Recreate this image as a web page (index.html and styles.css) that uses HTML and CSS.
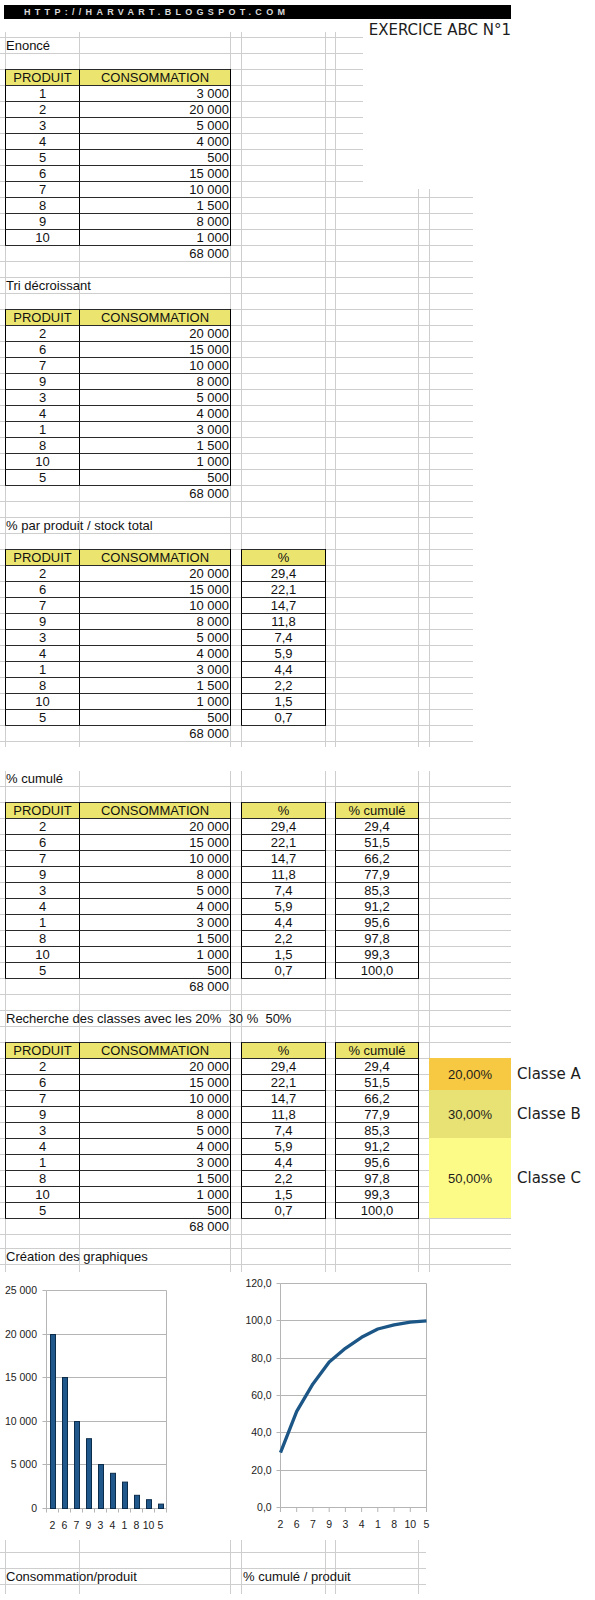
FILE: index.html
```html
<!DOCTYPE html>
<html lang="fr">
<head>
<meta charset="utf-8">
<title>Exercice ABC N°1</title>
<link rel="stylesheet" href="styles.css">
</head>
<body>
<header class="top">
  <div class="banner">HTTP://HARVART.BLOGSPOT.COM</div>
  <h1 class="title">EXERCICE ABC N°1</h1>
</header>

<section class="sheet sheet-1">
  <p class="lbl">Enoncé</p>
  <div class="tables">
    <div class="tbl tbl-ab">
      <div class="c hd">PRODUIT</div><div class="c hd">CONSOMMATION</div>
      <div class="c">1</div><div class="c num">3 000</div>
      <div class="c">2</div><div class="c num">20 000</div>
      <div class="c">3</div><div class="c num">5 000</div>
      <div class="c">4</div><div class="c num">4 000</div>
      <div class="c">5</div><div class="c num">500</div>
      <div class="c">6</div><div class="c num">15 000</div>
      <div class="c">7</div><div class="c num">10 000</div>
      <div class="c">8</div><div class="c num">1 500</div>
      <div class="c">9</div><div class="c num">8 000</div>
      <div class="c">10</div><div class="c num">1 000</div>
    </div>
  </div>
  <p class="tot">68 000</p>

  <p class="lbl">Tri décroissant</p>
  <div class="tables">
    <div class="tbl tbl-ab">
      <div class="c hd">PRODUIT</div><div class="c hd">CONSOMMATION</div>
      <div class="c">2</div><div class="c num">20 000</div>
      <div class="c">6</div><div class="c num">15 000</div>
      <div class="c">7</div><div class="c num">10 000</div>
      <div class="c">9</div><div class="c num">8 000</div>
      <div class="c">3</div><div class="c num">5 000</div>
      <div class="c">4</div><div class="c num">4 000</div>
      <div class="c">1</div><div class="c num">3 000</div>
      <div class="c">8</div><div class="c num">1 500</div>
      <div class="c">10</div><div class="c num">1 000</div>
      <div class="c">5</div><div class="c num">500</div>
    </div>
  </div>
  <p class="tot">68 000</p>

  <p class="lbl">% par produit / stock total</p>
  <div class="tables">
    <div class="tbl tbl-ab">
      <div class="c hd">PRODUIT</div><div class="c hd">CONSOMMATION</div>
      <div class="c">2</div><div class="c num">20 000</div>
      <div class="c">6</div><div class="c num">15 000</div>
      <div class="c">7</div><div class="c num">10 000</div>
      <div class="c">9</div><div class="c num">8 000</div>
      <div class="c">3</div><div class="c num">5 000</div>
      <div class="c">4</div><div class="c num">4 000</div>
      <div class="c">1</div><div class="c num">3 000</div>
      <div class="c">8</div><div class="c num">1 500</div>
      <div class="c">10</div><div class="c num">1 000</div>
      <div class="c">5</div><div class="c num">500</div>
    </div>
    <div class="tbl tbl-d">
      <div class="c hd">%</div>
      <div class="c">29,4</div><div class="c">22,1</div><div class="c">14,7</div><div class="c">11,8</div><div class="c">7,4</div>
      <div class="c">5,9</div><div class="c">4,4</div><div class="c">2,2</div><div class="c">1,5</div><div class="c">0,7</div>
    </div>
  </div>
  <p class="tot">68 000</p>
</section>

<section class="sheet sheet-2">
  <p class="lbl lbl-first">% cumulé</p>
  <div class="tables">
    <div class="tbl tbl-ab">
      <div class="c hd">PRODUIT</div><div class="c hd">CONSOMMATION</div>
      <div class="c">2</div><div class="c num">20 000</div>
      <div class="c">6</div><div class="c num">15 000</div>
      <div class="c">7</div><div class="c num">10 000</div>
      <div class="c">9</div><div class="c num">8 000</div>
      <div class="c">3</div><div class="c num">5 000</div>
      <div class="c">4</div><div class="c num">4 000</div>
      <div class="c">1</div><div class="c num">3 000</div>
      <div class="c">8</div><div class="c num">1 500</div>
      <div class="c">10</div><div class="c num">1 000</div>
      <div class="c">5</div><div class="c num">500</div>
    </div>
    <div class="tbl tbl-d">
      <div class="c hd">%</div>
      <div class="c">29,4</div><div class="c">22,1</div><div class="c">14,7</div><div class="c">11,8</div><div class="c">7,4</div>
      <div class="c">5,9</div><div class="c">4,4</div><div class="c">2,2</div><div class="c">1,5</div><div class="c">0,7</div>
    </div>
    <div class="tbl tbl-f">
      <div class="c hd">% cumulé</div>
      <div class="c">29,4</div><div class="c">51,5</div><div class="c">66,2</div><div class="c">77,9</div><div class="c">85,3</div>
      <div class="c">91,2</div><div class="c">95,6</div><div class="c">97,8</div><div class="c">99,3</div><div class="c">100,0</div>
    </div>
  </div>
  <p class="tot">68 000</p>

  <p class="lbl">Recherche des classes avec les 20%&nbsp; 30 %&nbsp; 50%</p>
  <div class="tables">
    <div class="tbl tbl-ab">
      <div class="c hd">PRODUIT</div><div class="c hd">CONSOMMATION</div>
      <div class="c">2</div><div class="c num">20 000</div>
      <div class="c">6</div><div class="c num">15 000</div>
      <div class="c">7</div><div class="c num">10 000</div>
      <div class="c">9</div><div class="c num">8 000</div>
      <div class="c">3</div><div class="c num">5 000</div>
      <div class="c">4</div><div class="c num">4 000</div>
      <div class="c">1</div><div class="c num">3 000</div>
      <div class="c">8</div><div class="c num">1 500</div>
      <div class="c">10</div><div class="c num">1 000</div>
      <div class="c">5</div><div class="c num">500</div>
    </div>
    <div class="tbl tbl-d">
      <div class="c hd">%</div>
      <div class="c">29,4</div><div class="c">22,1</div><div class="c">14,7</div><div class="c">11,8</div><div class="c">7,4</div>
      <div class="c">5,9</div><div class="c">4,4</div><div class="c">2,2</div><div class="c">1,5</div><div class="c">0,7</div>
    </div>
    <div class="tbl tbl-f">
      <div class="c hd">% cumulé</div>
      <div class="c">29,4</div><div class="c">51,5</div><div class="c">66,2</div><div class="c">77,9</div><div class="c">85,3</div>
      <div class="c">91,2</div><div class="c">95,6</div><div class="c">97,8</div><div class="c">99,3</div><div class="c">100,0</div>
    </div>
    <div class="classes">
      <div class="cls cls-a">20,00%</div>
      <div class="cls cls-b">30,00%</div>
      <div class="cls cls-c">50,00%</div>
    </div>
    <div class="class-names">
      <div class="cname cls-a-h">Classe A</div>
      <div class="cname cls-b-h">Classe B</div>
      <div class="cname cls-c-h">Classe C</div>
    </div>
  </div>
  <p class="tot">68 000</p>
</section>

<section class="sheet sheet-3">
  <p class="lbl">Création des graphiques</p>
</section>

<section class="charts">
  <svg class="chart chart-bar" width="230" height="268" viewBox="0 0 230 268">
    <g class="gl">
      <line x1="46.5" y1="18.5" x2="166.5" y2="18.5"/>
      <line x1="46.5" y1="62.5" x2="166.5" y2="62.5"/>
      <line x1="46.5" y1="105.5" x2="166.5" y2="105.5"/>
      <line x1="46.5" y1="149.5" x2="166.5" y2="149.5"/>
      <line x1="46.5" y1="192.5" x2="166.5" y2="192.5"/>
      <line x1="42.5" y1="236.5" x2="166.5" y2="236.5"/>
      <line x1="46.5" y1="18.5" x2="46.5" y2="240.5"/>
      <line x1="166.5" y1="18.5" x2="166.5" y2="240.5"/>
      <line x1="42.5" y1="18.5" x2="46.5" y2="18.5"/>
      <line x1="42.5" y1="62.5" x2="46.5" y2="62.5"/>
      <line x1="42.5" y1="105.5" x2="46.5" y2="105.5"/>
      <line x1="42.5" y1="149.5" x2="46.5" y2="149.5"/>
      <line x1="42.5" y1="192.5" x2="46.5" y2="192.5"/>
      <line x1="58.5" y1="236.5" x2="58.5" y2="240.5"/>
      <line x1="70.5" y1="236.5" x2="70.5" y2="240.5"/>
      <line x1="82.5" y1="236.5" x2="82.5" y2="240.5"/>
      <line x1="94.5" y1="236.5" x2="94.5" y2="240.5"/>
      <line x1="106.5" y1="236.5" x2="106.5" y2="240.5"/>
      <line x1="118.5" y1="236.5" x2="118.5" y2="240.5"/>
      <line x1="130.5" y1="236.5" x2="130.5" y2="240.5"/>
      <line x1="142.5" y1="236.5" x2="142.5" y2="240.5"/>
      <line x1="154.5" y1="236.5" x2="154.5" y2="240.5"/>
    </g>
    <g class="bars">
      <rect x="50.5" y="62.5" width="5" height="174"/>
      <rect x="62.5" y="105.5" width="5" height="131"/>
      <rect x="74.5" y="149.5" width="5" height="87"/>
      <rect x="86.5" y="166.7" width="5" height="69.8"/>
      <rect x="98.5" y="192.5" width="5" height="44"/>
      <rect x="110.5" y="201.3" width="5" height="35.2"/>
      <rect x="122.5" y="210.1" width="5" height="26.4"/>
      <rect x="134.5" y="223.3" width="5" height="13.2"/>
      <rect x="146.5" y="227.7" width="5" height="8.8"/>
      <rect x="158.5" y="232.1" width="5" height="4.4"/>
    </g>
    <g class="axt axt-y">
      <text x="37" y="22.3">25 000</text>
      <text x="37" y="66.3">20 000</text>
      <text x="37" y="109.3">15 000</text>
      <text x="37" y="153.3">10 000</text>
      <text x="37" y="196.3">5 000</text>
      <text x="37" y="240.3">0</text>
    </g>
    <g class="axt axt-x">
      <text x="52.5" y="257.3">2</text>
      <text x="64.5" y="257.3">6</text>
      <text x="76.5" y="257.3">7</text>
      <text x="88.5" y="257.3">9</text>
      <text x="100.5" y="257.3">3</text>
      <text x="112.5" y="257.3">4</text>
      <text x="124.5" y="257.3">1</text>
      <text x="136.5" y="257.3">8</text>
      <text x="148.5" y="257.3">10</text>
      <text x="160.5" y="257.3">5</text>
    </g>
  </svg>

  <svg class="chart chart-line" width="210" height="268" viewBox="0 0 210 268">
    <g class="gl">
      <line x1="50.5" y1="11.5" x2="196.5" y2="11.5"/>
      <line x1="50.5" y1="48.5" x2="196.5" y2="48.5"/>
      <line x1="50.5" y1="86.5" x2="196.5" y2="86.5"/>
      <line x1="50.5" y1="123.5" x2="196.5" y2="123.5"/>
      <line x1="50.5" y1="160.5" x2="196.5" y2="160.5"/>
      <line x1="50.5" y1="198.5" x2="196.5" y2="198.5"/>
      <line x1="46.5" y1="235.5" x2="196.5" y2="235.5"/>
      <line x1="50.5" y1="11.5" x2="50.5" y2="240"/>
      <line x1="196.5" y1="11.5" x2="196.5" y2="240"/>
      <line x1="46.5" y1="11.5" x2="50.5" y2="11.5"/>
      <line x1="46.5" y1="48.5" x2="50.5" y2="48.5"/>
      <line x1="46.5" y1="86.5" x2="50.5" y2="86.5"/>
      <line x1="46.5" y1="123.5" x2="50.5" y2="123.5"/>
      <line x1="46.5" y1="160.5" x2="50.5" y2="160.5"/>
      <line x1="46.5" y1="198.5" x2="50.5" y2="198.5"/>
      <line x1="66.7" y1="235.5" x2="66.7" y2="240"/>
      <line x1="82.9" y1="235.5" x2="82.9" y2="240"/>
      <line x1="99.2" y1="235.5" x2="99.2" y2="240"/>
      <line x1="115.4" y1="235.5" x2="115.4" y2="240"/>
      <line x1="131.6" y1="235.5" x2="131.6" y2="240"/>
      <line x1="147.8" y1="235.5" x2="147.8" y2="240"/>
      <line x1="164.1" y1="235.5" x2="164.1" y2="240"/>
      <line x1="180.3" y1="235.5" x2="180.3" y2="240"/>
    </g>
    <polyline class="curve" points="50.5,180.6 66.7,139.4 82.9,111.9 99.2,90.1 115.4,76.3 131.6,65.3 147.8,57 164.1,52.9 180.3,50.1 196.5,48.8"/>
    <g class="axt axt-y">
      <text x="41.7" y="15.3">120,0</text>
      <text x="41.7" y="52.3">100,0</text>
      <text x="41.7" y="90.3">80,0</text>
      <text x="41.7" y="127.3">60,0</text>
      <text x="41.7" y="164.3">40,0</text>
      <text x="41.7" y="202.3">20,0</text>
      <text x="41.7" y="239.3">0,0</text>
    </g>
    <g class="axt axt-x">
      <text x="50.5" y="255.5">2</text>
      <text x="66.7" y="255.5">6</text>
      <text x="82.9" y="255.5">7</text>
      <text x="99.2" y="255.5">9</text>
      <text x="115.4" y="255.5">3</text>
      <text x="131.6" y="255.5">4</text>
      <text x="147.8" y="255.5">1</text>
      <text x="164.1" y="255.5">8</text>
      <text x="180.3" y="255.5">10</text>
      <text x="196.5" y="255.5">5</text>
    </g>
  </svg>
</section>

<section class="sheet sheet-4">
  <div class="foot">
    <p class="lbl lbl-wide">Consommation/produit</p>
    <p class="lbl">% cumulé / produit</p>
  </div>
</section>
</body>
</html>
```

FILE: styles.css
```css
:root {
  --g: #cecece;
  --h: repeating-linear-gradient(to bottom, var(--g) 0 1px, transparent 1px 16px);
  --v6: linear-gradient(to right, transparent 5px, var(--g) 5px 6px, transparent 6px 79px, var(--g) 79px 80px, transparent 80px 230px, var(--g) 230px 231px, transparent 231px 241px, var(--g) 241px 242px, transparent 242px 325px, var(--g) 325px 326px, transparent 326px 335px, var(--g) 335px 336px, transparent 336px);
  --v2: linear-gradient(to right, transparent 418px, var(--g) 418px 419px, transparent 419px 429px, var(--g) 429px 430px, transparent 430px);
  --v1: linear-gradient(to right, transparent 418px, var(--g) 418px 419px, transparent 419px);
}

html, body {
  margin: 0;
  padding: 0;
  background: #fff;
}

body {
  width: 595px;
  color: #111;
  font-family: "Liberation Sans", Arial, sans-serif;
  font-size: 13px;
}

/* ---------- header ---------- */
.top {
  height: 32px;
  padding-top: 5px;
  box-sizing: border-box;
}

.banner {
  margin-left: 4px;
  width: 507px;
  height: 14px;
  box-sizing: border-box;
  padding-left: 20px;
  background: #000;
  color: #d9d9d9;
  font: bold 9px/14px "Liberation Sans", Arial, sans-serif;
  letter-spacing: 4.3px;
  white-space: nowrap;
  overflow: hidden;
}

.title {
  margin: 0;
  width: 511px;
  height: 13px;
  box-sizing: border-box;
  padding-top: 4px;
  text-align: right;
  font: normal 15px/15px "DejaVu Sans", sans-serif;
  color: #1c1c1c;
  white-space: nowrap;
}

/* ---------- spreadsheet sheets ---------- */
.sheet {
  box-sizing: border-box;
  background-repeat: no-repeat;
}

.sheet-1 {
  height: 715px;
  padding-top: 5px;
  background-image: var(--h), var(--h), var(--v6), var(--v2);
  background-size: 363px 145px, 473px 545px, 100% 100%, 100% 558px;
  background-position: 0 5px, 0 165px, 0 0, 0 157px;
}

.sheet-2 {
  margin-top: 24px;
  height: 469px;
  background-image: var(--h), var(--v6), var(--v2);
  background-size: 511px 449px, 100% 100%, 100% 100%;
  background-position: 0 15px, 0 0, 0 0;
}

.sheet-3 {
  height: 32px;
  padding-top: 8px;
  background-image: var(--h), var(--v6), var(--v2);
  background-size: 511px 17px, 100% 100%, 100% 100%;
  background-position: 0 8px, 0 0, 0 0;
}

.sheet-4 {
  height: 54px;
  padding-top: 28px;
  background-image: var(--h), var(--v6), var(--v1);
  background-size: 426px 33px, 100% 100%, 100% 100%;
  background-position: 0 12px, 0 0, 0 0;
}

.lbl {
  margin: 0 0 16px;
  height: 16px;
  box-sizing: border-box;
  padding: 1px 0 0 6px;
  line-height: 16px;
  white-space: nowrap;
}

.lbl-first {
  height: 15px;
  padding-top: 0;
  line-height: 15px;
}

.sheet-3 .lbl,
.sheet-4 .lbl {
  margin-bottom: 0;
}

.foot {
  display: flex;
}

.lbl-wide {
  width: 237px;
}

.tot {
  margin: 0 0 16px 5px;
  width: 225px;
  height: 16px;
  box-sizing: border-box;
  padding: 1px 1px 0 0;
  line-height: 16px;
  text-align: right;
  white-space: nowrap;
}

/* ---------- tables ---------- */
.tables {
  display: flex;
  align-items: flex-start;
  height: 176px;
}

.tbl {
  display: grid;
  grid-auto-rows: 16px;
  border-right: 1px solid #000;
  border-bottom: 1px solid #2a2a2a;
  background: #fff;
}

.tbl-ab {
  margin-left: 5px;
  grid-template-columns: 74px 151px;
}

.tbl-d {
  margin-left: 10px;
  grid-template-columns: 84px;
}

.tbl-f {
  margin-left: 9px;
  grid-template-columns: 83px;
}

.c {
  box-sizing: border-box;
  border-top: 1px solid #2a2a2a;
  border-left: 1px solid #000;
  line-height: 16px;
  text-align: center;
  white-space: nowrap;
}

.hd {
  background: #ebe56f;
}

.num {
  text-align: right;
  padding-right: 1px;
}

/* ---------- ABC classes ---------- */
.classes {
  margin: 16px 0 0 10px;
  width: 82px;
  display: flex;
  flex-direction: column;
}

.cls {
  display: flex;
  align-items: center;
  justify-content: center;
  color: #1c1c1c;
}

.cls-a { height: 32px; background: #f7c942; }
.cls-b { height: 48px; background: #e8e274; }
.cls-c { height: 80px; background: #fdfb87; }

.class-names {
  margin: 16px 0 0 6px;
  display: flex;
  flex-direction: column;
}

.cname {
  display: flex;
  align-items: center;
  font: 15px "DejaVu Sans", sans-serif;
  color: #1c1c1c;
  white-space: nowrap;
}

.cls-a-h { height: 32px; }
.cls-b-h { height: 48px; }
.cls-c-h { height: 80px; }

/* ---------- charts ---------- */
.charts {
  display: flex;
  height: 268px;
  background: #fff;
}

.chart {
  display: block;
  flex: none;
}

.gl line {
  stroke: #b5b5b5;
  stroke-width: 1;
}

.bars rect {
  fill: #20588b;
  stroke: #0c2c4b;
  stroke-width: 1;
}

.curve {
  fill: none;
  stroke: #1b5686;
  stroke-width: 3.3;
  stroke-linejoin: round;
}

.axt text {
  font-family: "Liberation Sans", Arial, sans-serif;
  font-size: 10.5px;
  fill: #222;
}

.axt-y text {
  text-anchor: end;
}

.axt-x text {
  text-anchor: middle;
}
```
